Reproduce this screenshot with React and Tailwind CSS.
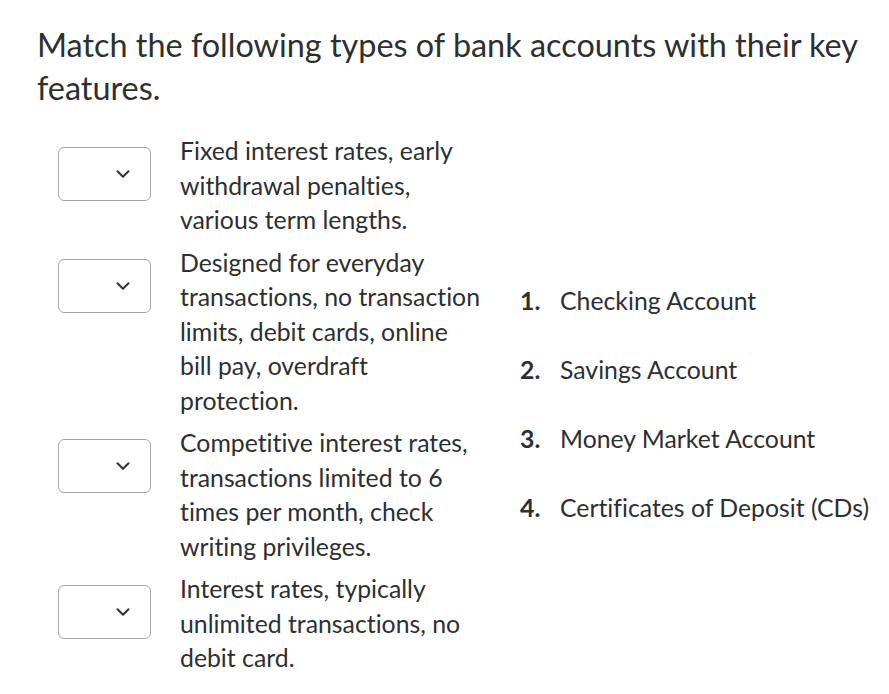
import { ChevronDown } from "lucide-react";

const features = [
  "Fixed interest rates, early withdrawal penalties, various term lengths.",
  "Designed for everyday transactions, no transaction limits, debit cards, online bill pay, overdraft protection.",
  "Competitive interest rates, transactions limited to 6 times per month, check writing privileges.",
  "Interest rates, typically unlimited transactions, no debit card.",
];

const accounts = [
  "Checking Account",
  "Savings Account",
  "Money Market Account",
  "Certificates of Deposit (CDs)",
];

function SelectBox() {
  return (
    <div className="mt-[13px] flex h-[54px] w-[93px] shrink-0 items-center justify-end rounded-md border border-[#a3a7ab] bg-white pr-[16px]">
      <ChevronDown className="h-[22px] w-[22px] text-[#333]" strokeWidth={2.2} />
    </div>
  );
}

export default function App() {
  return (
    <div
      className="min-h-screen bg-white pl-[37px] pt-[23px] text-[#2d2f31] [font-variant-ligatures:none]"
      style={{ fontFamily: "Lato, 'Liberation Sans', sans-serif" }}
    >
      <h1 className="pr-4 text-[32.4px] leading-[43px]">
        Match the following types of bank accounts with their key features.
      </h1>

      <div className="mt-[25px] flex">
        <div className="flex flex-col gap-[8px]">
          {features.map((f) => (
            <div key={f} className="flex">
              <div className="ml-[21px]">
                <SelectBox />
              </div>
              <div className="ml-[29px] w-[302px] text-[24.8px] leading-[34.5px]">
                {f}
              </div>
            </div>
          ))}
        </div>

        <ol className="ml-[38px] flex flex-col justify-center gap-[35px]">
          {accounts.map((a, i) => (
            <li key={a} className="flex text-[24.8px] leading-[34px]">
              <span className="w-[40px] font-bold">{i + 1}.</span>
              <span>{a}</span>
            </li>
          ))}
        </ol>
      </div>
    </div>
  );
}
